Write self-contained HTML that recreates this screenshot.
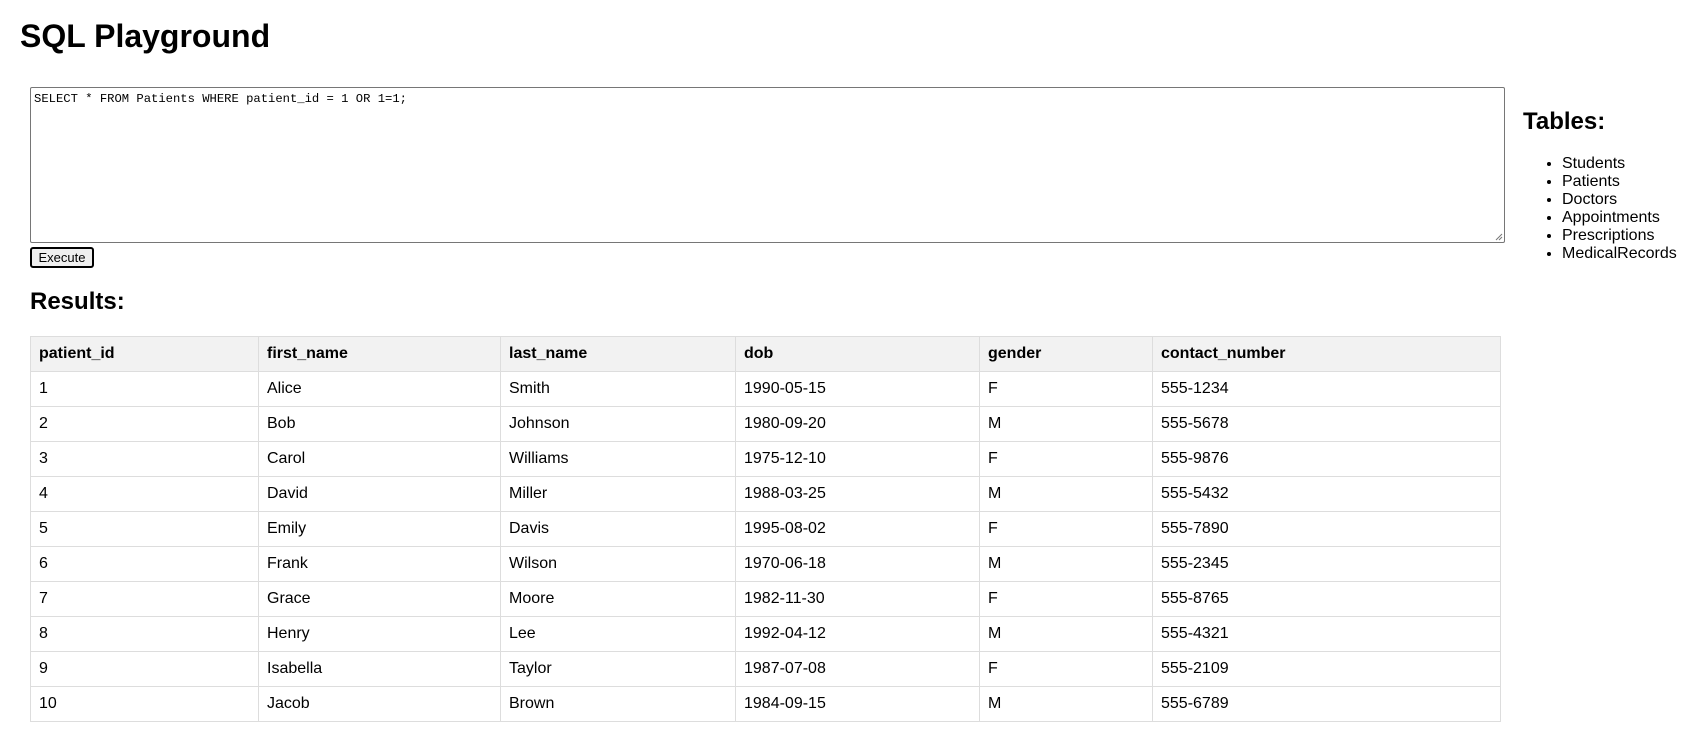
<!DOCTYPE html>
<html><head><meta charset="utf-8"><style>
body{margin:0;width:1688px;height:742px;background:#fff;font-family:"Liberation Sans",Arial,sans-serif;color:#000;position:relative;overflow:hidden}
.a{position:absolute;margin:0}
h1{font-size:32px;font-weight:bold}
h2{font-size:24px;font-weight:bold}
.ta{left:30px;top:87px;width:1473px;height:154px;border:1px solid #767676;border-radius:2px;}
.ta span{position:absolute;left:3px;top:4px;font-family:"Liberation Mono",monospace;font-size:12.2px;white-space:pre;line-height:15px}
.btn{left:30px;top:247px;width:60px;height:17px;border:2px solid #000;border-radius:3px;background:#efefef;font-size:13px;text-align:center;line-height:17px}
table{position:absolute;left:30px;top:336px;width:1471px;border-collapse:collapse;font-size:16px}
td,th{border:1px solid #ddd;height:35px;padding:0 8px;text-align:left;box-sizing:border-box}
th{background:#f2f2f2;font-weight:bold}
ul{left:1523px;top:155px;padding-left:39px;font-size:16px;line-height:18px}
</style></head><body>
<h1 class="a" style="left:20px;top:18px">SQL Playground</h1>
<div class="a ta"><span>SELECT * FROM Patients WHERE patient_id = 1 OR 1=1;</span>
<svg style="position:absolute;right:1px;bottom:1px" width="9" height="9"><path d="M8 2L2 8M8 5L5 8" stroke="#777" stroke-width="1"/></svg></div>
<div class="a btn">Execute</div>
<h2 class="a" style="left:30px;top:288px">Results:</h2>
<h2 class="a" style="left:1523px;top:108px">Tables:</h2>
<ul class="a"><li>Students</li><li>Patients</li><li>Doctors</li><li>Appointments</li><li>Prescriptions</li><li>MedicalRecords</li></ul>
<table>
<colgroup><col style="width:228px"><col style="width:242px"><col style="width:235px"><col style="width:244px"><col style="width:173px"><col></colgroup>
<tr><th>patient_id</th><th>first_name</th><th>last_name</th><th>dob</th><th>gender</th><th>contact_number</th></tr>
<tr><td>1</td><td>Alice</td><td>Smith</td><td>1990-05-15</td><td>F</td><td>555-1234</td></tr>
<tr><td>2</td><td>Bob</td><td>Johnson</td><td>1980-09-20</td><td>M</td><td>555-5678</td></tr>
<tr><td>3</td><td>Carol</td><td>Williams</td><td>1975-12-10</td><td>F</td><td>555-9876</td></tr>
<tr><td>4</td><td>David</td><td>Miller</td><td>1988-03-25</td><td>M</td><td>555-5432</td></tr>
<tr><td>5</td><td>Emily</td><td>Davis</td><td>1995-08-02</td><td>F</td><td>555-7890</td></tr>
<tr><td>6</td><td>Frank</td><td>Wilson</td><td>1970-06-18</td><td>M</td><td>555-2345</td></tr>
<tr><td>7</td><td>Grace</td><td>Moore</td><td>1982-11-30</td><td>F</td><td>555-8765</td></tr>
<tr><td>8</td><td>Henry</td><td>Lee</td><td>1992-04-12</td><td>M</td><td>555-4321</td></tr>
<tr><td>9</td><td>Isabella</td><td>Taylor</td><td>1987-07-08</td><td>F</td><td>555-2109</td></tr>
<tr><td>10</td><td>Jacob</td><td>Brown</td><td>1984-09-15</td><td>M</td><td>555-6789</td></tr>
</table>
</body></html>
